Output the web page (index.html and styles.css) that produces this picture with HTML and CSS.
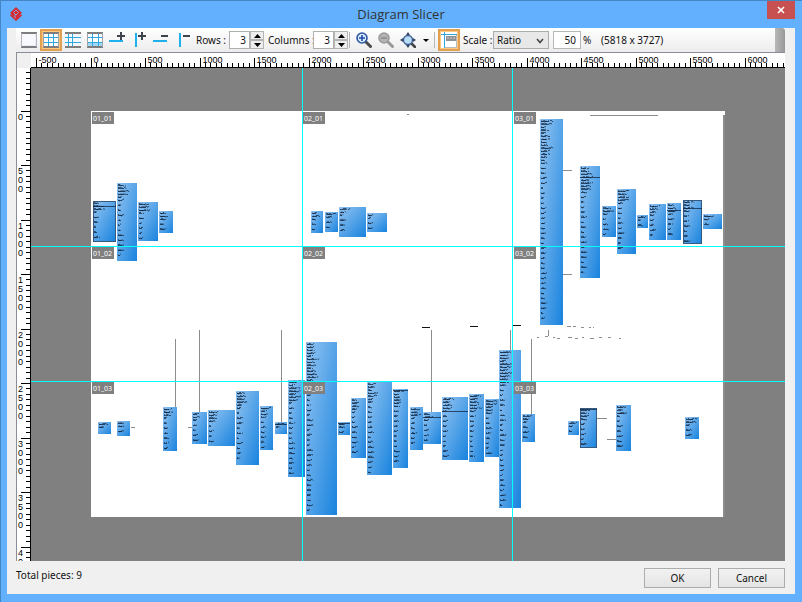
FILE: index.html
```html
<!DOCTYPE html>
<html lang="en">
<head>
  <meta charset="UTF-8">
  <meta name="viewport" content="width=device-width, initial-scale=1.0">
  <title>Diagram Slicer</title>
  <link rel="stylesheet" href="styles.css">
</head>
<body>
  <div class="window">
    <header class="title-bar">
      <svg class="app-logo" width="14" height="16" viewBox="0 0 14 16">
        <path d="M7 1l6 6-1.500 1L13 9.500 7 15 1 9.500 2.500 8 1 7z" fill="#d8262c"/>
        <path d="M7 4l2.500 2.500L7 9 4.500 6.500zM6 8.500v4" fill="none" stroke="#8fa6dc"/>
        <path d="M2.500 8.500L5 11M11.500 8.500L8.500 11" fill="none" stroke="#a05a90" stroke-width=".7"/>
      </svg>
      <h1>Diagram Slicer</h1>
      <button class="close" aria-label="Close">
        <svg width="8" height="8" viewBox="0 0 8 8"><path d="M1 1l6 6M7 1L1 7" stroke="#fff" stroke-width="1.600"/></svg>
      </button>
    </header>

    <main>
      <div class="toolbar">
        <div class="tools">
          <button class="tool" aria-label="No slicing">
            <svg width="16" height="16" viewBox="0 0 16 16"><path d="M0 0h16v16H0z" fill="#e9eef6"/><path d="M1 2h13v11H1z" fill="#f7f9fc"/><path d="M0 1h16M0 15h16" stroke="#7d7d7d" stroke-width="2"/><path d="M.5 1v14M15.500 1v14" stroke="#b0b4ba"/></svg>
          </button>
          <button class="tool selected" aria-label="Slice evenly">
            <svg width="16" height="16" viewBox="0 0 16 16"><path d="M0 0h16v16H0z" fill="#fff"/><path d="M0 5.500h16M0 10.500h16M5.500 1v14M10.500 1v14" stroke="#2fa8e0"/><path d="M0 1h16M0 15h16" stroke="#7d7d7d" stroke-width="2"/><path d="M.5 1v14M15.500 1v14" stroke="#a0a4aa"/></svg>
          </button>
          <button class="tool" aria-label="Slice by fixed size">
            <svg width="16" height="16" viewBox="0 0 16 16"><path d="M0 0h16v16H0z" fill="#f4f8fc"/><path d="M0 5.500h16M0 10.500h16M3.500 1v14M7.500 1v14" stroke="#2fa8e0"/><path d="M0 1h16M0 15h16" stroke="#7d7d7d" stroke-width="2"/></svg>
          </button>
          <button class="tool" aria-label="Slice by size and fit">
            <svg width="16" height="16" viewBox="0 0 16 16"><path d="M0 0h16v16H0z" fill="#fff"/><path d="M0 11h16v3H0z" fill="#9fd8f4"/><path d="M0 5.500h16M0 10.500h16M5.500 1v14M11.500 1v14" stroke="#2fa8e0"/><path d="M0 1h16M0 15h16" stroke="#7d7d7d" stroke-width="2"/><path d="M.5 1v14M15.500 1v14" stroke="#a0a4aa"/></svg>
          </button>
          <button class="tool" aria-label="Add row">
            <svg width="16" height="16" viewBox="0 0 16 16"><path d="M0 9h14" stroke="#1fb0ee" stroke-width="2"/><path d="M8 4h8M12 0v8" stroke="#3e444c" stroke-width="2"/></svg>
          </button>
          <button class="tool" aria-label="Add column">
            <svg width="16" height="16" viewBox="0 0 16 16"><path d="M5 1v14" stroke="#1fb0ee" stroke-width="2"/><path d="M7 4h8M11 0v8" stroke="#3e444c" stroke-width="2"/></svg>
          </button>
          <button class="tool" aria-label="Remove row">
            <svg width="16" height="16" viewBox="0 0 16 16"><path d="M0 9h14" stroke="#1fb0ee" stroke-width="2"/><path d="M8 4h7" stroke="#3e444c" stroke-width="2"/></svg>
          </button>
          <button class="tool" aria-label="Remove column">
            <svg width="16" height="16" viewBox="0 0 16 16"><path d="M5 1v14" stroke="#1fb0ee" stroke-width="2"/><path d="M8 4h7" stroke="#3e444c" stroke-width="2"/></svg>
          </button>
        </div>

        <label class="rows-label" for="rows">Rows :</label>
        <div class="spinner">
          <input id="rows" type="text" value="3">
          <button aria-label="More rows"><svg width="7" height="4" viewBox="0 0 7 4"><path d="M0 4l3.500-4L7 4z"/></svg></button>
          <button aria-label="Fewer rows"><svg width="7" height="4" viewBox="0 0 7 4"><path d="M0 0l3.500 4L7 0z"/></svg></button>
        </div>
        <label class="columns-label" for="columns">Columns :</label>
        <div class="spinner">
          <input id="columns" type="text" value="3">
          <button aria-label="More columns"><svg width="7" height="4" viewBox="0 0 7 4"><path d="M0 4l3.500-4L7 4z"/></svg></button>
          <button aria-label="Fewer columns"><svg width="7" height="4" viewBox="0 0 7 4"><path d="M0 0l3.500 4L7 0z"/></svg></button>
        </div>
        <span class="separator"></span>

        <div class="tools">
          <button class="tool" aria-label="Zoom in">
            <svg width="16" height="16" viewBox="0 0 16 16"><path d="M9.500 9.500l5 5" stroke="#4a4a4c" stroke-width="3" stroke-linecap="round"/><circle cx="6" cy="6" r="5" fill="#d9ecff" stroke="#2d55a5" stroke-width="1.600"/><path d="M3 6h6M6 3v6" stroke="#1f4da8" stroke-width="1.600"/></svg>
          </button>
          <button class="tool" aria-label="Zoom out" disabled>
            <svg width="16" height="16" viewBox="0 0 16 16"><path d="M9.500 9.500l5 5" stroke="#989898" stroke-width="3" stroke-linecap="round"/><circle cx="6" cy="6" r="5" fill="#b4b4b4" stroke="#9a9a9a" stroke-width="1.600"/><path d="M3 6h6" stroke="#8c8c8c" stroke-width="1.600"/></svg>
          </button>
          <button class="tool" aria-label="Fit to window">
            <svg width="16" height="16" viewBox="0 0 16 16"><path d="M11 11l4 4" stroke="#444" stroke-width="2.500" stroke-linecap="round"/><circle cx="8" cy="8" r="4.500" fill="#b9dcf8" stroke="#3d6095" stroke-width="1.400"/><path d="M8 0l2 3H6zM8 16l2-3H6zM0 8l3-2v4zM16 8l-3-2v4z" fill="#33485f"/></svg>
          </button>
          <button class="drop" aria-label="Zoom options"><svg width="6" height="3" viewBox="0 0 6 3"><path d="M0 0h6L3 3z"/></svg></button>
        </div>
        <span class="separator"></span>
        <button class="tool selected" aria-label="Show rulers">
          <svg width="16" height="16" viewBox="0 0 16 16"><path d="M0 0h16v16H0z" fill="#fff"/><path d="M0 2.500h16M3.500 0v16" stroke="#2fa8e0"/><path d="M5 4h10v5H5z" fill="#8e9296"/><path d="M6 6h8" stroke="#d0d0d0" stroke-dasharray="2 1"/><path d="M15.500 3v13M4 15.500h12" stroke="#b8bcc4"/></svg>
        </button>
        <label class="scale-label" for="scale">Scale :</label>
        <div class="select">
          <select id="scale"><option>Ratio</option></select>
          <svg width="8" height="6" viewBox="0 0 8 6"><path d="M1 1l3 3.500L7 1" fill="none" stroke="#444" stroke-width="1.600"/></svg>
        </div>
        <input class="percent" id="percent" type="text" value="50">
        <label class="percent-label" for="percent">%</label>
        <span class="size">(5818 x 3727)</span>
        <span class="toolbar-end"></span>
      </div>

      <div class="slicer">
        <div class="corner"></div>
        <svg class="ruler" id="ruler-x"></svg>
        <svg class="ruler" id="ruler-y"></svg>
        <svg class="canvas" id="canvas">
          <defs>
            <linearGradient id="box-fill" x1="0" y1="0" x2="1" y2="1">
              <stop offset="0" stop-color="#93c4f2"/>
              <stop offset="1" stop-color="#1883de"/>
            </linearGradient>
          </defs>
        </svg>
      </div>

      <footer>
        <span class="total">Total pieces: 9</span>
        <button class="button">OK</button>
        <button class="button">Cancel</button>
      </footer>
    </main>
  </div>

  <script src="script.js"></script>
</body>
</html>
```

FILE: styles.css
```css
/* Global Styles */
* {
  box-sizing: border-box;
}

body {
  margin: 0;
  font-family: "Noto Sans", "Open Sans", sans-serif;
  font-size: 10px;
  color: #111;
}

button,
input,
select {
  font: inherit;
  color: inherit;
  margin: 0;
  padding: 0;
}

svg {
  display: block;
}

/* Window */
.window {
  display: flex;
  flex-direction: column;
  height: 100vh;
  padding: 0 7px 8px 6px;
  background-color: #62b0fe;
  border: 1px solid #4586c4;
  border-width: 1px 0 0 1px;
}

.title-bar {
  display: grid;
  grid-template-columns: 1fr auto 1fr;
  height: 27px;
  flex: none;
}

.title-bar h1 {
  margin: 0;
  font-family: "Open Sans", sans-serif;
  font-size: 13px;
  font-weight: normal;
  line-height: 27px;
  color: #333;
}

.app-logo {
  margin: 5px 0 0 2px;
}

.close {
  display: flex;
  align-items: center;
  justify-content: center;
  justify-self: end;
  width: 28px;
  height: 18px;
  border: none;
  background-color: #c75050;
}

main {
  display: flex;
  flex-direction: column;
  flex: 1;
  min-height: 0;
  padding: 0 10px 0 9px;
  background-color: #f0f0f0;
}

/* Toolbar */
.toolbar {
  display: flex;
  align-items: center;
  height: 24px;
  flex: none;
  padding-left: 2px;
  background: linear-gradient(#fff, #ececec);
  white-space: nowrap;
}

.tools {
  display: flex;
  flex: none;
}

.tool {
  display: flex;
  align-items: center;
  justify-content: center;
  flex: none;
  width: 22px;
  height: 22px;
  border: none;
  background: none;
}

.tool.selected {
  border: 2px solid #e0a050;
  background-color: #ffc880;
}

.rows-label {
  width: 35px;
  padding-left: 2px;
  flex: none;
}

.columns-label {
  width: 49px;
  padding-left: 4px;
  flex: none;
}

.spinner {
  display: grid;
  grid-template: 9px 9px / 21px 14px;
  flex: none;
}

.spinner input {
  grid-row: span 2;
  width: 100%;
  min-width: 0;
  padding-right: 3px;
  border: 1px solid #b0b0b0;
  background-color: #fff;
  text-align: right;
}

.spinner button {
  display: flex;
  align-items: center;
  justify-content: center;
  border: 1px solid #b4b4b4;
  background-color: #eee;
}

.separator {
  width: 1px;
  height: 16px;
  margin: 0 3px 0 1px;
  flex: none;
  background-color: #b8b8b8;
}

.drop {
  display: flex;
  align-items: center;
  justify-content: center;
  width: 14px;
  border: none;
  background: none;
}

.scale-label {
  width: 33px;
  padding-left: 3px;
  flex: none;
}

.select {
  position: relative;
  flex: none;
}

.select select {
  width: 56px;
  height: 18px;
  padding-left: 3px;
  appearance: none;
  border: 1px solid #acacac;
  border-radius: 0;
  background-color: #e8e8e8;
}

.select svg {
  position: absolute;
  right: 5px;
  top: 7px;
  pointer-events: none;
}

.percent {
  width: 28px;
  height: 18px;
  margin: 0 2px 0 4px;
  padding-right: 4px;
  border: 1px solid #b8b8b8;
  text-align: right;
}

.percent-label {
  width: 18px;
}

.toolbar-end {
  width: 10px;
  height: 24px;
  margin-left: auto;
  border-radius: 0 3px 0 0;
  background: linear-gradient(to right, #b8b8b8, #989898);
}

/* Rulers and canvas */
.slicer {
  display: grid;
  grid-template: 15px minmax(0, 1fr) / 14px minmax(0, 1fr);
  flex: 1;
  min-height: 0;
  border: 1px solid #8a8e96;
  border-width: 1px 0 0 1px;
}

.ruler,
.canvas {
  width: 100%;
  height: 100%;
  overflow: hidden;
}

.ruler {
  background-color: #fff;
  font-family: "Liberation Sans", sans-serif;
  font-size: 9px;
}

.ruler path {
  stroke: #000;
  stroke-width: 1;
  shape-rendering: crispEdges;
}

.canvas {
  background-color: #808080;
}

.page {
  fill: #fff;
}

.box {
  fill: url(#box-fill);
}

.box.outlined {
  stroke: #35597f;
}

.members {
  fill: none;
  stroke: #10253f;
  stroke-width: 1;
  opacity: 0.75;
}

.connector {
  fill: none;
  stroke: #8c8c8c;
  shape-rendering: crispEdges;
}

.dash {
  fill: none;
  stroke: #111;
  shape-rendering: crispEdges;
}

.guide {
  fill: #00ffff;
}

.tag {
  fill: #808080;
}

.tag-text {
  fill: #fff;
  font-size: 7px;
}

/* Footer */
footer {
  display: flex;
  align-items: center;
  gap: 7px;
  height: 33px;
  flex: none;
}

.total {
  margin-right: auto;
  padding-bottom: 5px;
}

.button {
  width: 67px;
  height: 20px;
  border: 1px solid #acacac;
  background: linear-gradient(#f2f2f2, #e4e4e4);
}
```

FILE: script.js
```js
const SVG = 'http://www.w3.org/2000/svg';
const STEP = 54.5; // pixels for 500 diagram units
const ORIGIN = { x: 60, y: 43 };
const PAGE = { w: 633, h: 406 };
const ROWS = 3;
const COLUMNS = 3;

// x, y, width, height, then the offset of a header line (0 = none) and outline flag
const boxes = [
  [2, 90, 23, 41, 5, 1], [26, 72, 20, 78], [47, 91, 20, 39], [68, 100, 14, 22],
  [220, 100, 12, 22], [234, 101, 13, 20], [248, 96, 27, 30], [276, 102, 20, 19],
  [449, 8, 23, 206], [489, 55, 20, 112, 11], [511, 95, 14, 31], [526, 78, 19, 65],
  [546, 104, 11, 13], [558, 93, 17, 36], [576, 92, 14, 37, 7], [592, 89, 19, 44, 8, 1],
  [612, 103, 19, 15],
  [7, 311, 13, 12], [26, 310, 13, 15], [72, 296, 14, 44], [101, 301, 15, 32],
  [117, 299, 27, 36], [145, 280, 23, 74], [169, 295, 13, 44], [184, 311, 12, 12, 2],
  [197, 269, 17, 97], [215, 231, 31, 173], [247, 311, 12, 13, 1], [260, 287, 15, 60],
  [276, 271, 25, 93], [302, 278, 15, 79, 1], [319, 296, 13, 43], [332, 301, 18, 32, 5],
  [351, 286, 26, 63, 14], [378, 283, 15, 68], [394, 288, 14, 58], [408, 239, 22, 158],
  [431, 303, 13, 28],
  [477, 310, 11, 14], [489, 297, 17, 40, 1, 1], [525, 294, 15, 46], [594, 306, 14, 22]
];

const connectors = [
  'M499 4.5h68', 'M472 59.5h9', 'M472 163.5h9', 'M632.5 4v402', 'M633.5 4v402',
  'M84.5 228v68', 'M108.5 219v82', 'M190.5 219v92', 'M340.5 219v82',
  'M419.5 219v20', 'M440.5 228v75', 'M457.5 219v6', 'M506 307.5h10', 'M516 328.5h9',
  'M40 316.5h4', 'M97 316.5h4', 'M316 3.5h2',
  'M476 215.5h4m2 0h3m5 1h3m5 0h2m2 0h1', 'M446 226.5h2m6 -1h3m5 1h2m2 1h3m8 -1h4m3 1h3m4 -1h2m6 1h4m5 -1h3m6 0h3m8 1h2'
];

const dashes = ['M331 216.5h8', 'M379 215.5h8', 'M422 214.5h8'];

function add(parent, name, attributes, text) {
  const node = document.createElementNS(SVG, name);
  for (const key in attributes) {
    node.setAttribute(key, attributes[key]);
  }
  if (text !== undefined) {
    node.textContent = text;
  }
  parent.appendChild(node);
  return node;
}

let seed = 7;
function random() {
  seed = (seed * 16807) % 2147483647;
  return seed / 2147483647;
}

// Tiny strokes for the member lines of a class box
function members(x, y, w, h) {
  const top = h * 0.2;
  let d = '';
  for (let row = 1; row < h - 3; row += row < top ? 3 : 5) {
    const length = Math.min(w - 3, row < top ? 5 + random() * 8 : 3 + random() * 4);
    d += `M${x + 1} ${y + row + 0.5}`;
    for (let i = 1; i <= length; i++) {
      const command = random() < 0.12 ? 'M' : 'L';
      d += `${command}${x + 1 + i} ${(y + row + random() * 2).toFixed(1)}`;
    }
    d += `M${x + 1} ${y + row + 1.5}h${Math.round(length * 0.6)}`;
  }
  return d;
}

function drawRulerX() {
  const ruler = document.getElementById('ruler-x');
  const width = ruler.getBoundingClientRect().width;
  let d = `M0 14.5h${width}`;
  for (let i = -10; ORIGIN.x + i * STEP / 10 < width; i++) {
    const x = Math.floor(ORIGIN.x + i * STEP / 10) + 0.5;
    d += i % 10 === 0 ? `M${x} 5v10` : `M${x} 10v5`;
    if (i % 10 === 0) {
      add(ruler, 'text', { x: x + 2, y: 10 }, i * 50);
    }
  }
  add(ruler, 'path', { d });
}

function drawRulerY() {
  const ruler = document.getElementById('ruler-y');
  const height = ruler.getBoundingClientRect().height;
  let d = `M13.5 0v${height}`;
  for (let i = -7; ORIGIN.y + i * STEP / 10 < height; i++) {
    const y = Math.floor(ORIGIN.y + i * STEP / 10) + 0.5;
    d += i % 10 === 0 ? `M4 ${y}h10` : `M9 ${y}h5`;
    if (i % 10 === 0) {
      String(i * 50).split('').forEach((digit, n) => {
        const baseline = y + 8 + n * 9;
        if (baseline < height + 5) {
          add(ruler, 'text', { x: 1, y: baseline }, digit);
        }
      });
    }
  }
  add(ruler, 'path', { d });
}

function drawCanvas() {
  const canvas = document.getElementById('canvas');
  const page = add(canvas, 'g', { transform: `translate(${ORIGIN.x} ${ORIGIN.y})` });
  add(page, 'rect', { class: 'page', width: PAGE.w + 1, height: PAGE.h });

  connectors.forEach(d => add(page, 'path', { class: 'connector', d }));
  dashes.forEach(d => add(page, 'path', { class: 'dash', d }));

  boxes.forEach(([x, y, w, h, header, outlined]) => {
    if (outlined) {
      add(page, 'rect', { class: 'box outlined', x: x + 0.5, y: y + 0.5, width: w - 1, height: h - 1 });
    } else {
      add(page, 'rect', { class: 'box', x, y, width: w, height: h });
    }
    add(page, 'path', { class: 'members', d: members(x, y, w, h) });
    if (header) {
      add(page, 'path', { class: 'members', d: `M${x} ${y + header + 0.5}h${w}` });
    }
  });

  const width = Math.floor(PAGE.w / COLUMNS);
  const height = Math.floor(PAGE.h / ROWS);
  for (let c = 1; c < COLUMNS; c++) {
    add(canvas, 'rect', { class: 'guide', x: ORIGIN.x + c * width - (c - 1), y: 0, width: 1, height: '100%' });
  }
  for (let r = 1; r < ROWS; r++) {
    add(canvas, 'rect', { class: 'guide', x: 0, y: ORIGIN.y + r * height, width: '100%', height: 1 });
  }
  for (let r = 0; r < ROWS; r++) {
    for (let c = 0; c < COLUMNS; c++) {
      const x = c * width + 1;
      const y = r * height + 1;
      add(page, 'rect', { class: 'tag', x, y, width: 22, height: 12 });
      add(page, 'text', { class: 'tag-text', x: x + 1, y: y + 9 }, `0${c + 1}_0${r + 1}`);
    }
  }
}

drawRulerX();
drawRulerY();
drawCanvas();
```
